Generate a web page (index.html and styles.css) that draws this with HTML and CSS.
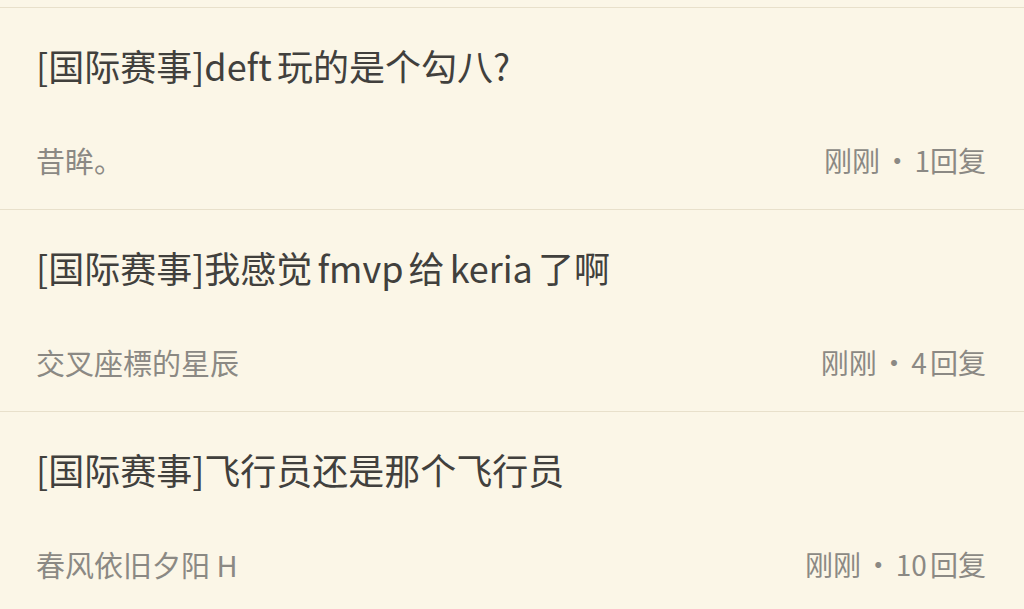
FILE: index.html
```html
<!DOCTYPE html>
<html lang="zh-CN">
<head>
    <meta charset="UTF-8">
    <meta name="viewport" content="width=device-width, initial-scale=1.0">
    <title>帖子列表</title>
    <link rel="stylesheet" href="styles.css">
</head>
<body>

<div class="topic-list">
    <div class="topic">
        <div class="topic-title">[国际赛事]deft 玩的是个勾八?</div>
        <div class="topic-meta">
            <span class="author">昔眸。</span>
            <span class="info">刚刚 · 1回复</span>
        </div>
    </div>
    <div class="topic">
        <div class="topic-title">[国际赛事]我感觉 fmvp 给 keria 了啊</div>
        <div class="topic-meta">
            <span class="author">交叉座標的星辰</span>
            <span class="info">刚刚 · 4 回复</span>
        </div>
    </div>
    <div class="topic">
        <div class="topic-title">[国际赛事]飞行员还是那个飞行员</div>
        <div class="topic-meta">
            <span class="author">春风依旧夕阳 H</span>
            <span class="info">刚刚 · 10 回复</span>
        </div>
    </div>
</div>

</body>
</html>
```

FILE: styles.css
```css
body {
    margin: 0;
    font-family: "Noto Sans CJK SC", "Noto Sans", sans-serif;
    background-color: #fbf6e7;
    color: #41403d;
    overflow: hidden;
}
.topic-list {
    margin-top: 7px;
}
.topic {
    border-top: 1px solid #e8e0cb;
    padding: 35px 38px 31px 36px;
}
.topic-title {
    font-size: 36px;
    line-height: 44px;
    height: 44px;
    word-spacing: -3px;
}
.topic-meta {
    display: flex;
    justify-content: space-between;
    align-items: center;
    margin-top: 55px;
    height: 36px;
    color: #8b8984;
}
.author {
    font-size: 29px;
}
.info {
    font-size: 28px;
    word-spacing: -3px;
}
```
